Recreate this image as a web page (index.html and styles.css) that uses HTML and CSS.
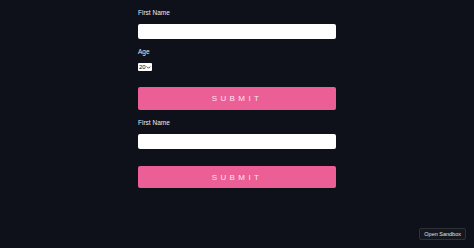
FILE: index.html
```html
<!DOCTYPE html>
<html>
<head>
<meta charset="utf-8">
<link rel="stylesheet" href="styles.css">
</head>
<body>
<main class="wrap">
  <form class="form">
    <label class="label">First Name</label>
    <input class="text-input" type="text">
    <label class="label label-age">Age</label>
    <div class="select-box">
      <select class="age-select"><option>20</option></select>
      <svg class="select-arrow" viewBox="0 0 6 4" width="5" height="3"><path d="M0.6 0.6 L3 3 L5.4 0.6" fill="none" stroke="#222" stroke-width="1.1"/></svg>
    </div>
    <button class="submit" type="button">SUBMIT</button>
  </form>
  <form class="form form-second">
    <label class="label">First Name</label>
    <input class="text-input" type="text">
    <button class="submit submit-second" type="button">SUBMIT</button>
  </form>
</main>
<button class="sandbox" type="button">Open Sandbox</button>
</body>
</html>
```
FILE: styles.css
```css
html, body {
  margin: 0;
  padding: 0;
  background: #0e111a;
  height: 100%;
}
body {
  font-family: "Liberation Sans", Arial, sans-serif;
  color: #e6e6e6;
  position: relative;
  overflow: hidden;
}
.wrap {
  width: 198px;
  margin: 0 auto;
  padding-top: 9px;
}
.form {
  display: flex;
  flex-direction: column;
}
.label {
  font-size: 6.5px;
  line-height: 8px;
  color: #ececec;
  margin-bottom: 7px;
}
.text-input {
  height: 15px;
  box-sizing: border-box;
  border: none;
  border-radius: 2px;
  background: #fff;
  margin: 0;
  padding: 0;
}
.label-age {
  margin-top: 9px;
  margin-bottom: 7px;
}
.select-box {
  position: relative;
  align-self: flex-start;
  width: 14px;
  height: 8px;
  background: #fff;
  border-radius: 1px;
}
.age-select {
  appearance: none;
  -webkit-appearance: none;
  width: 14px;
  height: 8px;
  box-sizing: border-box;
  font-family: "Liberation Sans", Arial, sans-serif;
  font-size: 6px;
  line-height: 8px;
  padding: 0 0 0 1px;
  margin: 0;
  border: none;
  background: transparent;
  color: #000;
  display: block;
}
.select-arrow {
  position: absolute;
  right: 1px;
  top: 3px;
  pointer-events: none;
}
.submit {
  margin-top: 16px;
  height: 23px;
  border: none;
  border-radius: 2px;
  background: #ec5f96;
  color: #fbe4ee;
  font-family: "Liberation Sans", Arial, sans-serif;
  font-size: 8px;
  letter-spacing: 3.4px;
  padding: 0;
}
.form-second {
  margin-top: 9px;
}
.submit-second {
  margin-top: 17px;
  height: 22px;
}
.sandbox {
  position: absolute;
  right: 8px;
  bottom: 8px;
  height: 12px;
  padding: 0 4px;
  background: #15171f;
  border: 1px solid #2e313a;
  border-radius: 2px;
  color: #e2e2e2;
  font-family: "Liberation Sans", Arial, sans-serif;
  font-size: 5.5px;
}
```
